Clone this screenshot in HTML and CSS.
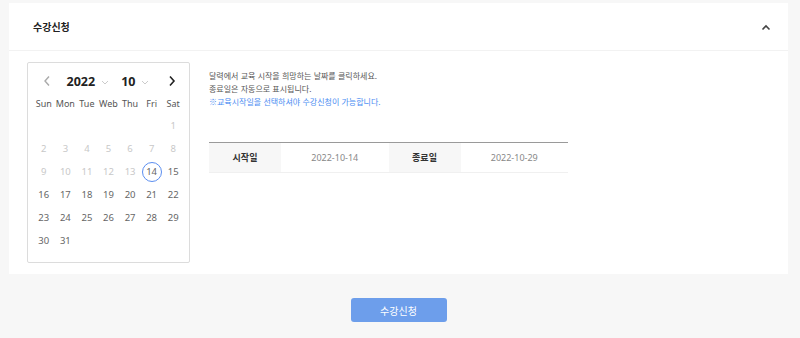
FILE: index.html
```html
<!DOCTYPE html>
<html lang="ko">
<head>
<meta charset="utf-8">
<link rel="stylesheet" href="styles.css">
</head>
<body>
<div class="page">
  <section class="card">
    <header class="card-head">
      <h2 class="title">수강신청</h2>
      <svg class="toggle" width="10" height="7" viewBox="0 0 10 7"><path d="M1.5 5.5 L5 2 L8.5 5.5" fill="none" stroke="#444" stroke-width="1.6"/></svg>
    </header>
    <div class="card-body">
      <div class="calendar">
        <div class="cal-head">
          <svg class="nav prev" width="8" height="12" viewBox="0 0 8 12"><path d="M6 1.5 L2 6 L6 10.5" fill="none" stroke="#aaa" stroke-width="1.4"/></svg>
          <div class="selects">
            <span class="sel">2022<svg class="caret" width="8" height="5" viewBox="0 0 8 5"><path d="M1 1 L4 4 L7 1" fill="none" stroke="#ccc" stroke-width="1"/></svg></span>
            <span class="sel">10<svg class="caret" width="8" height="5" viewBox="0 0 8 5"><path d="M1 1 L4 4 L7 1" fill="none" stroke="#ccc" stroke-width="1"/></svg></span>
          </div>
          <svg class="nav next" width="8" height="12" viewBox="0 0 8 12"><path d="M2 1.5 L6 6 L2 10.5" fill="none" stroke="#222" stroke-width="1.6"/></svg>
        </div>
        <div class="grid dows">
          <span>Sun</span><span>Mon</span><span>Tue</span><span>Web</span><span>Thu</span><span>Fri</span><span>Sat</span>
        </div>
        <div class="grid dates">
          <span></span><span></span><span></span><span></span><span></span><span></span><span class="off">1</span>
          <span class="off">2</span><span class="off">3</span><span class="off">4</span><span class="off">5</span><span class="off">6</span><span class="off">7</span><span class="off">8</span>
          <span class="off">9</span><span class="off">10</span><span class="off">11</span><span class="off">12</span><span class="off">13</span><span class="sel-day"><i>14</i></span><span>15</span>
          <span>16</span><span>17</span><span>18</span><span>19</span><span>20</span><span>21</span><span>22</span>
          <span>23</span><span>24</span><span>25</span><span>26</span><span>27</span><span>28</span><span>29</span>
          <span>30</span><span>31</span><span></span><span></span><span></span><span></span><span></span>
        </div>
      </div>
      <div class="info">
        <p class="desc">달력에서 교육 시작을 희망하는 날짜를 클릭하세요.<br>종료일은 자동으로 표시됩니다.<br><span class="note">※교육시작일을 선택하셔야 수강신청이 가능합니다.</span></p>
        <table class="period">
          <tr>
            <th>시작일</th><td>2022-10-14</td><th>종료일</th><td>2022-10-29</td>
          </tr>
        </table>
      </div>
    </div>
  </section>
  <div class="actions">
    <button class="submit">수강신청</button>
  </div>
</div>
</body>
</html>
```

FILE: styles.css
```css
* { box-sizing: border-box; }
body {
  margin: 0;
  background: #f7f7f7;
  font-family: "Noto Sans", "Noto Sans CJK KR", sans-serif;
  color: #555;
}
.page {
  padding: 3px 12px 0 9px;
}
.card {
  background: #fff;
}
.card-head {
  height: 48px;
  padding: 0 17px 0 24px;
  display: flex;
  align-items: center;
  justify-content: space-between;
  border-bottom: 1px solid #f2f2f2;
}
.title {
  margin: 0;
  font-size: 10px;
  font-weight: 700;
  color: #222;
  font-family: "Noto Sans CJK KR", sans-serif;
}
.toggle { display: block; margin-top: 2px; }
.card-body {
  display: flex;
  gap: 19px;
  padding: 11px 18px 11px;
}
.calendar {
  width: 163px;
  height: 201px;
  border: 1px solid #dcdcdc;
  border-radius: 2px;
  padding: 6px 5px 0;
}
.cal-head {
  height: 24px;
  display: flex;
  align-items: center;
  justify-content: space-between;
  padding: 0 8px 0 10px;
}
.nav { display: block; }
.selects {
  display: flex;
  gap: 12px;
  margin-right: 3px;
}
.sel {
  display: flex;
  align-items: center;
  gap: 6px;
  font-size: 12.5px;
  font-weight: 700;
  color: #222;
  font-family: "Noto Sans", sans-serif;
}
.caret { display: block; margin-top: 2px; }
.grid {
  display: grid;
  grid-template-columns: repeat(7, 1fr);
  text-align: center;
}
.dows span {
  height: 21px;
  line-height: 21px;
  font-size: 9px;
  color: #555;
}
.dates span {
  height: 23px;
  display: flex;
  align-items: center;
  justify-content: center;
  font-size: 9.5px;
  color: #666;
}
.dates span.off { color: #c8c8c8; }
.dates .sel-day i {
  font-style: normal;
  width: 20px;
  height: 20px;
  border: 1px solid #5b8ef0;
  border-radius: 50%;
  display: flex;
  align-items: center;
  justify-content: center;
}
.info {
  width: 359px;
  padding-top: 7px;
}
.desc {
  margin: 0;
  font-size: 8px;
  line-height: 13px;
  color: #555;
  font-family: "Noto Sans CJK KR", sans-serif;
}
.note { color: #4a8cf2; }
.period {
  margin-top: 34px;
  width: 100%;
  border-collapse: collapse;
  border-top: 1px solid #9a9a9a;
  border-bottom: 1px solid #f0f0f0;
  font-size: 9px;
}
.period th, .period td {
  height: 30px;
  padding: 0;
  text-align: center;
}
.period th {
  width: 72px;
  background: #f7f7f7;
  font-weight: 700;
  color: #333;
  font-family: "Noto Sans CJK KR", sans-serif;
}
.period td {
  color: #888;
}
.actions {
  display: flex;
  justify-content: center;
  padding-top: 24px;
}
.submit {
  width: 96px;
  height: 24px;
  border: 0;
  border-radius: 3px;
  background: #6d9eeb;
  color: #fff;
  font-family: "Noto Sans CJK KR", sans-serif;
  font-size: 10px;
  padding: 0;
}
```
